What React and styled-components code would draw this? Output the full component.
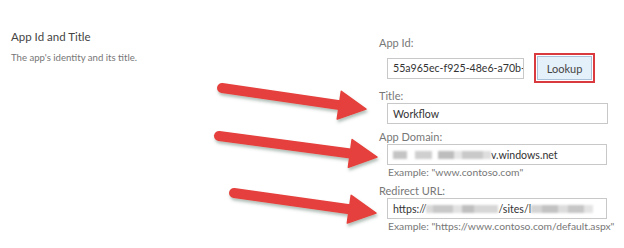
import React from 'react'
import styled, { createGlobalStyle } from 'styled-components'

const GlobalStyle = createGlobalStyle`
  html, body {
    margin: 0;
    padding: 0;
    background: #fff;
  }
  body {
    font-family: Lato, "Open Sans", sans-serif;
  }
`

const ARROWS = [
  { from: [222, 88], to: [366, 109] },
  { from: [219, 136], to: [377, 157] },
  { from: [234, 193], to: [376, 213] },
]

const arrowShape = ({ from, to }, headLen = 27, headWidth = 28) => {
  const [x1, y1] = from
  const [x2, y2] = to
  const dx = x2 - x1
  const dy = y2 - y1
  const len = Math.hypot(dx, dy)
  const ux = dx / len
  const uy = dy / len
  const bx = x2 - ux * headLen
  const by = y2 - uy * headLen
  const nx = -uy * (headWidth / 2)
  const ny = ux * (headWidth / 2)
  return {
    shaft: { x1, y1, x2: bx + ux * 2, y2: by + uy * 2 },
    head: `${x2},${y2} ${bx + nx},${by + ny} ${bx - nx},${by - ny}`,
  }
}

// blurred-out parts of the urls, as gray smudges
const SMUDGE_DOMAIN =
  'linear-gradient(90deg, #c4c4c4 0 14%, transparent 14% 22%, #cfcfcf 22% 40%, transparent 40% 46%, #bdbdbd 46% 62%, #e6e6e6 62% 70%, #c9c9c9 70% 92%, #dedede 92% 100%)'
const SMUDGE_HOST =
  'linear-gradient(90deg, #dadada 0 10%, #c8c8c8 10% 38%, #e2e2e2 38% 50%, #bfbfbf 50% 66%, #d6d6d6 66% 100%)'
const SMUDGE_SITE =
  'linear-gradient(90deg, #d4d4d4 0 18%, #c2c2c2 18% 44%, #dcdcdc 44% 60%, #c6c6c6 60% 86%, #e4e4e4 86% 100%)'

const App = () => (
  <>
    <GlobalStyle />
    <Page>
      <Intro>
        <Heading>App Id and Title</Heading>
        <Description>The app's identity and its title.</Description>
      </Intro>

      <Form>
        <Label>App Id:</Label>
        <InputRow>
          <TextBox $width={137}>55a965ec-f925-48e6-a70b-</TextBox>
          <Highlight>
            <Button>Lookup</Button>
          </Highlight>
        </InputRow>

        <Label $gap={6}>Title:</Label>
        <TextBox $width={221}>Workflow</TextBox>

        <Label $gap={6}>App Domain:</Label>
        <TextBox $width={220}>
          <Smudge $w={98} $bg={SMUDGE_DOMAIN} />
          v.windows.net
        </TextBox>
        <Hint>Example: "www.contoso.com"</Hint>

        <Label $gap={5}>Redirect URL:</Label>
        <TextBox $width={220}>
          https://
          <Smudge $w={72} $bg={SMUDGE_HOST} />
          /sites/l
          <Smudge $w={62} $bg={SMUDGE_SITE} />
        </TextBox>
        <Hint>Example: "https://www.contoso.com/default.aspx"</Hint>
      </Form>

      <Overlay width="624" height="248" viewBox="0 0 624 248">
        <defs>
          <filter id="shadow" x="-10%" y="-50%" width="130%" height="250%">
            <feDropShadow dx="1" dy="2.5" stdDeviation="1.6" floodColor="#4f6f5f" floodOpacity="0.45" />
          </filter>
        </defs>
        {ARROWS.map((a, i) => {
          const { shaft, head } = arrowShape(a)
          return (
            <g key={i} filter="url(#shadow)" fill="#e5403c" stroke="#e5403c">
              <line {...shaft} strokeWidth="10" strokeLinecap="round" />
              <polygon points={head} strokeWidth="1.5" strokeLinejoin="round" />
            </g>
          )
        })}
      </Overlay>
    </Page>
  </>
)

export default App

const Page = styled.div`
  position: relative;
  width: 624px;
  height: 248px;
  display: flex;
  overflow: hidden;
`

const Intro = styled.div`
  flex: 0 0 368px;
  padding: 30px 0 0 11px;
  box-sizing: border-box;
`

const Heading = styled.div`
  font-size: 11.5px;
  line-height: 14px;
  color: #444;
`

const Description = styled.div`
  margin-top: 7px;
  font-size: 9.6px;
  line-height: 13px;
  color: #777;
`

const Form = styled.div`
  flex: 1 0 auto;
  display: flex;
  flex-direction: column;
  align-items: flex-start;
  padding: 36px 0 0 11px;
  white-space: nowrap;
`

const Label = styled.div`
  margin-top: ${p => p.$gap || 0}px;
  font-size: 11px;
  line-height: 14px;
  color: #777;
`

const InputRow = styled.div`
  display: flex;
  align-items: center;
  gap: 10px;
  margin: 3px 0 0 8px;
`

const TextBox = styled.div`
  width: ${p => p.$width}px;
  height: 21px;
  box-sizing: border-box;
  margin-left: 8px;
  ${InputRow} & {
    margin-left: 0;
  }
  border: 1px solid #c8c8c8;
  background: #fff;
  padding: 0 5px;
  display: flex;
  align-items: center;
  overflow: hidden;
  font-size: 10.6px;
  color: #333;
`

const Smudge = styled.span`
  flex: 0 0 ${p => p.$w}px;
  height: 8px;
  margin-top: 1px;
  background: ${p => p.$bg};
  filter: blur(1.3px);
`

const Highlight = styled.div`
  border: 2px solid #d93a3d;
  padding: 1px;
`

const Button = styled.div`
  width: 55px;
  height: 24px;
  box-sizing: border-box;
  border: 1px solid #a9c2da;
  background: #e4f0fa;
  display: flex;
  align-items: center;
  justify-content: center;
  font-size: 11px;
  color: #444;
`

const Hint = styled.div`
  margin: 1px 0 0 9px;
  font-size: 10.3px;
  line-height: 13px;
  color: #777;
`

const Overlay = styled.svg`
  position: absolute;
  left: 0;
  top: 0;
  pointer-events: none;
`
